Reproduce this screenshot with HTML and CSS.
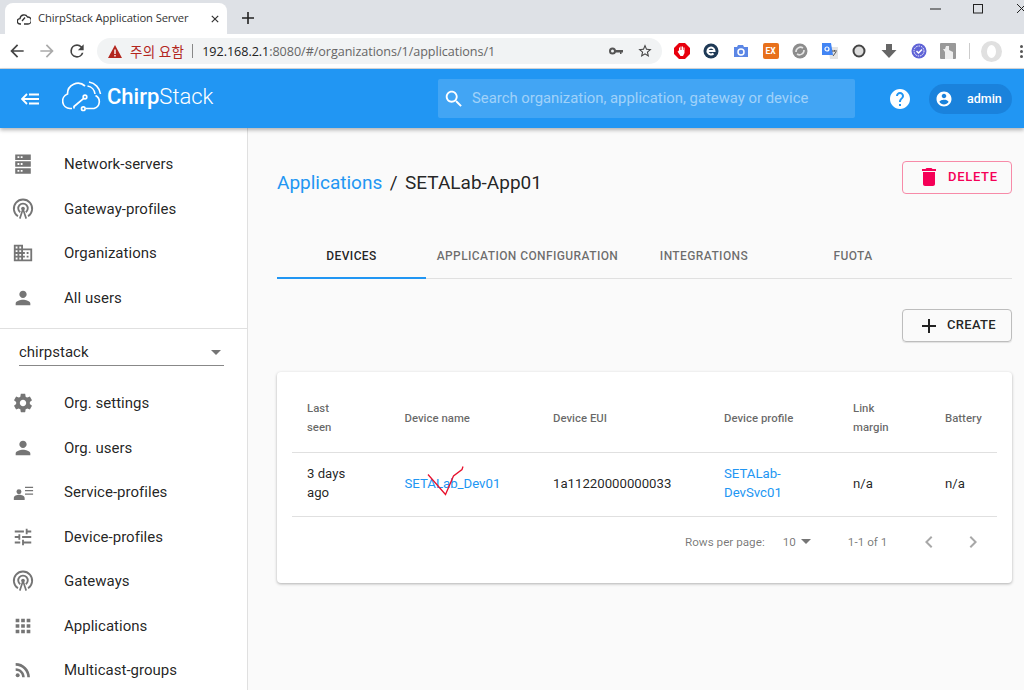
FILE: index.html
```html
<!DOCTYPE html>
<html lang="en">
<head>
<meta charset="utf-8">
<title>ChirpStack Application Server</title>
<link rel="stylesheet" href="styles.css">
</head>
<body>
<div class="tabstrip">
  <div class="tab">
    <svg class="favicon" viewBox="0 0 14 12"><path d="M4 11H3A2.500 2.500 0 0 1 3 5.600 4 4 0 0 1 10.500 4 3.500 3.500 0 0 1 11 11H7M5 8l3-3.500" fill="none" stroke="#333" stroke-width="1.300"/></svg>
    <span class="tab-title">ChirpStack Application Server</span>
    <svg class="tab-close" viewBox="0 0 10 10"><path d="M1 1l8 8M9 1l-8 8" stroke="#333" stroke-width="1.500"/></svg>
  </div>
  <svg class="newtab" viewBox="0 0 12 12"><path d="M6 0v12M0 6h12" stroke="#222" stroke-width="1.600"/></svg>
  <div class="winctl">
    <svg class="win-btn" viewBox="0 0 11 11"><path d="M0 6h11" stroke="#222" stroke-width="1"/></svg>
    <svg class="win-btn" viewBox="0 0 11 11"><rect x=".5" y="1.500" width="9" height="8.500" fill="none" stroke="#222"/></svg>
    <svg class="win-btn" viewBox="0 0 11 11"><path d="M1 1l9 9M10 1l-9 9" stroke="#222"/></svg>
  </div>
</div>
<div class="browserbar">
  <svg class="nav-ic" viewBox="0 0 24 24"><path fill="#444" d="M20 11H7.830l5.590-5.590L12 4l-8 8 8 8 1.410-1.410L7.830 13H20z"/></svg>
  <svg class="nav-ic" viewBox="0 0 24 24"><path fill="#aaa" d="M4 11h12.170l-5.590-5.590L12 4l8 8-8 8-1.410-1.410L16.170 13H4z"/></svg>
  <svg class="nav-ic" viewBox="0 0 24 24"><path fill="#444" d="M17.650 6.350A7.960 7.960 0 0 0 12 4a8 8 0 1 0 7.730 10h-2.080A6 6 0 1 1 12 6c1.660 0 3.140.69 4.220 1.780L13 11h7V4z"/></svg>
  <div class="omnibox">
    <svg class="warn" viewBox="0 0 14 13"><path fill="#b3261e" d="M7 0l7 13H0z"/><path fill="#fff" d="M6.300 4.500h1.400v4.500H6.300zM6.300 10h1.400v1.400H6.300z"/></svg>
    <span class="warn-text">주의 요함</span>
    <span class="omni-sep"></span>
    <span class="url"><span class="url-host">192.168.2.1</span>:8080/#/organizations/1/applications/1</span>
    <svg class="key" viewBox="0 0 14 8"><circle cx="3.500" cy="4" r="2.500" fill="none" stroke="#555" stroke-width="2"/><path d="M6 3h8v2.500h-1.500v1.500h-1.500V5.500H6z" fill="#555"/></svg>
    <svg class="star" viewBox="0 0 24 24"><path fill="#444" d="M22 9.240l-7.190-.620L12 2 9.190 8.630 2 9.240l5.460 4.730L5.820 21 12 17.270 18.180 21l-1.630-7.030L22 9.240zM12 15.400l-3.760 2.270 1-4.280-3.320-2.880 4.380-.380L12 6.100l1.710 4.040 4.380.380-3.320 2.880 1 4.280L12 15.400z"/></svg>
  </div>
  <div class="exts">
    <span class="ext"><svg viewBox="0 0 16 16"><path fill="#e8000d" d="M5 0h6l5 5v6l-5 5H5l-5-5V5z"/><path fill="#fff" d="M5 7V4.500h1V7h.500V3.500h1V7H8V3.500h1V7h.500V4.500h1V10l-1.500 3H6.500L3.500 8.500l1-.5z"/></svg></span>
    <span class="ext"><svg viewBox="0 0 16 16"><circle cx="8" cy="8" r="7.500" fill="#1f3a56"/><path d="M4.500 8h7A3.500 3.500 0 1 0 10.500 10.500" fill="none" stroke="#fff" stroke-width="2"/></svg></span>
    <span class="ext"><svg viewBox="0 0 16 16"><path fill="#5b86e5" d="M1 4h3l1-2h5l1 2h4v10H1z"/><circle cx="8" cy="9" r="3" fill="none" stroke="#fff" stroke-width="1.500"/></svg></span>
    <span class="ext"><span class="ext-ex">EX</span></span>
    <span class="ext"><svg viewBox="0 0 16 16"><circle cx="8" cy="8" r="7.500" fill="#8c8c8c"/><path d="M4 9a4.500 4.500 0 0 1 7-4M12 7a4.500 4.500 0 0 1-7 4" fill="none" stroke="#e4e4e4" stroke-width="1.600"/></svg></span>
    <span class="ext"><svg viewBox="0 0 16 16"><path fill="#e4e4e4" d="M6 4h10v12H8z"/><path fill="#4285f4" d="M0 0h9l2 12H0z"/><circle cx="5" cy="6" r="2" fill="none" stroke="#fff" stroke-width="1.200"/><path d="M10 8h5M12.500 7v1.500M11 13l3-4" stroke="#555" fill="none"/></svg></span>
    <span class="ext"><svg viewBox="0 0 16 16"><circle cx="8" cy="8" r="5.500" fill="#ddd" stroke="#444" stroke-width="2"/></svg></span>
    <span class="ext"><svg viewBox="0 0 16 16"><path fill="#666" d="M5 1h6v6h4.500L8 15 .5 7H5z"/></svg></span>
    <span class="ext"><svg viewBox="0 0 16 16"><circle cx="8" cy="8" r="7.500" fill="#5f63d6"/><circle cx="8" cy="8" r="5" fill="none" stroke="#fff" stroke-dasharray="1.500 1"/><path d="M5.500 8l2 2 3.500-3.500" fill="none" stroke="#fff" stroke-width="1.500"/></svg></span>
    <span class="ext"><svg viewBox="0 0 16 16"><rect width="16" height="16" rx="1" fill="#999"/><path fill="#eee" d="M5 16V9L3 6h2l1-3h3v4l4 2v7z"/></svg></span>
  </div>
  <span class="bar-sep"></span>
  <span class="avatar"><span class="avatar-in"></span></span>
  <span class="dots"><i></i><i></i><i></i></span>
</div>
<header class="appbar">
  <svg class="menu-back" viewBox="0 0 18 12"><path d="M6 1L1 6l5 5M1 6h17M8 1.500h10M8 10.500h10" fill="none" stroke="#fff" stroke-width="1.800"/></svg>
  <svg class="logo" viewBox="0 0 40 31"><g fill="none" stroke="#fff" stroke-width="1.700"><path d="M10 27.500H8A7.500 7.500 0 0 1 5.500 13 10.500 10.500 0 0 1 23 5M33.500 14.500A7 7 0 0 1 32 27.500H24"/><path d="M25.500 5A9 9 0 0 1 33 13M27 1A14 14 0 0 1 38.500 13" stroke-width="1.600"/><circle cx="23" cy="16" r="1.800"/><circle cx="21.300" cy="27.700" r="1.800"/><path d="M21.700 17.300L12 25.500V27.500"/></g></svg>
  <span class="brand"><b>Chirp</b>Stack</span>
  <div class="search">
    <svg class="search-ic" viewBox="0 0 24 24"><path fill="#fff" d="M15.500 14h-.790l-.280-.270C15.410 12.590 16 11.110 16 9.500 16 5.910 13.090 3 9.500 3S3 5.910 3 9.500 5.910 16 9.500 16c1.610 0 3.090-.590 4.230-1.570l.270.280v.790l5 4.990L20.490 19l-4.990-5zm-6 0C7.010 14 5 11.990 5 9.500S7.010 5 9.500 5 14 7.010 14 9.500 11.990 14 9.500 14z"/></svg>
    <span class="search-ph">Search organization, application, gateway or device</span>
  </div>
  <svg class="help" viewBox="0 0 24 24"><path fill="#fff" d="M12 2C6.480 2 2 6.480 2 12s4.480 10 10 10 10-4.480 10-10S17.520 2 12 2zm1 17h-2v-2h2v2zm2.070-7.750l-.9.920C13.450 12.900 13 13.500 13 15h-2v-.5c0-1.100.45-2.100 1.170-2.830l1.240-1.260c.37-.36.590-.86.590-1.410 0-1.100-.9-2-2-2s-2 .9-2 2H8c0-2.210 1.790-4 4-4s4 1.790 4 4c0 .88-.36 1.680-.93 2.250z"/></svg>
  <div class="chip">
    <svg class="chip-ic" viewBox="0 0 24 24"><path fill="#fff" d="M12 2C6.480 2 2 6.480 2 12s4.480 10 10 10 10-4.480 10-10S17.520 2 12 2zm0 3c1.660 0 3 1.340 3 3s-1.340 3-3 3-3-1.340-3-3 1.340-3 3-3zm0 14.200c-2.500 0-4.710-1.280-6-3.220.03-1.990 4-3.080 6-3.080 1.990 0 5.970 1.090 6 3.080-1.290 1.940-3.500 3.220-6 3.220z"/></svg>
    <span>admin</span>
  </div>
</header>
<div class="body">
  <nav class="sidebar">
    <ul class="menu menu-top">
      <li><svg viewBox="0 0 24 24"><path fill-rule="evenodd" d="M3.500 1.500h17v6h-17zM6 3.500v2h2v-2zM9.500 3.500v2h2v-2zM3.500 9h17v6h-17zM6 11v2h2v-2zM9.500 11v2h2v-2zM3.500 16.500h17v6h-17zM6 18.500v2h2v-2zM9.500 18.500v2h2v-2z"/></svg>Network-servers</li>
      <li><svg viewBox="0 0 24 24"><g fill="none" stroke="#757575" stroke-width="2"><path d="M6.500 20A10 10 0 1 1 17.500 20M9 15.500a5.200 5.200 0 1 1 6 0"/><path d="M12 12l-3.500 10.500M12 12l3.500 10.500" stroke-width="1.800"/></g><circle cx="12" cy="11.500" r="2"/></svg>Gateway-profiles</li>
      <li><svg viewBox="0 0 24 24"><path d="M12 7V3H2v18h20V7H12zM6 19H4v-2h2v2zm0-4H4v-2h2v2zm0-4H4V9h2v2zm0-4H4V5h2v2zm4 12H8v-2h2v2zm0-4H8v-2h2v2zm0-4H8V9h2v2zm0-4H8V5h2v2zm10 12h-8v-2h2v-2h-2v-2h2v-2h-2V9h8v10zm-2-8h-2v2h2v-2zm0 4h-2v2h2v-2z"/></svg>Organizations</li>
      <li><svg viewBox="0 0 24 24"><path d="M12 12c2.210 0 4-1.790 4-4s-1.790-4-4-4-4 1.790-4 4 1.790 4 4 4zm0 2c-2.670 0-8 1.340-8 4v2h16v-2c0-2.660-5.330-4-8-4z"/></svg>All users</li>
    </ul>
    <div class="org-select"><span>chirpstack</span><i class="caret"></i></div>
    <ul class="menu">
      <li><svg viewBox="0 0 24 24"><path d="M19.430 12.980c.04-.32.07-.64.07-.98s-.03-.66-.07-.98l2.110-1.650c.19-.15.24-.42.12-.64l-2-3.460c-.12-.22-.39-.3-.61-.22l-2.490 1c-.52-.4-1.080-.73-1.690-.98l-.38-2.650C14.460 2.180 14.250 2 14 2h-4c-.25 0-.46.18-.49.42l-.38 2.650c-.61.25-1.170.59-1.690.98l-2.490-1c-.23-.09-.49 0-.61.22l-2 3.460c-.13.22-.07.49.12.64l2.110 1.650c-.04.32-.07.65-.07.98s.03.66.07.98l-2.110 1.650c-.19.15-.24.42-.12.64l2 3.460c.12.22.39.3.61.22l2.490-1c.52.4 1.080.73 1.690.98l.38 2.650c.03.24.24.42.49.42h4c.25 0 .46-.18.49-.42l.38-2.650c.61-.25 1.170-.59 1.690-.98l2.490 1c.23.09.49 0 .61-.22l2-3.460c.12-.22.07-.49-.12-.64l-2.110-1.650zM12 15.500c-1.930 0-3.500-1.570-3.500-3.500s1.570-3.500 3.500-3.500 3.500 1.570 3.500 3.500-1.570 3.500-3.500 3.500z"/></svg>Org. settings</li>
      <li><svg viewBox="0 0 24 24"><path d="M12 12c2.210 0 4-1.790 4-4s-1.790-4-4-4-4 1.790-4 4 1.790 4 4 4zm0 2c-2.670 0-8 1.340-8 4v2h16v-2c0-2.660-5.330-4-8-4z"/></svg>Org. users</li>
      <li><svg viewBox="0 0 24 24"><circle cx="7.600" cy="11.700" r="2.700"/><path d="M2 20.700v-2.200c0-2.300 3.200-3.500 5.800-3.500s6 1.200 6 3.500v2.200zM14.200 6.200h8.800v1.400h-8.800zM14.200 9.900h8.800v1.400h-8.800zM14.200 13.500h8.800v1.400h-8.800z"/></svg>Service-profiles</li>
      <li><svg viewBox="0 0 24 24"><path d="M3 17v2h6v-2H3zM3 5v2h10V5H3zm10 16v-2h8v-2h-8v-2h-2v6h2zM7 9v2H3v2h4v2h2V9H7zm14 4v-2H11v2h10zm-6-4h2V7h4V5h-4V3h-2v6z"/></svg>Device-profiles</li>
      <li><svg viewBox="0 0 24 24"><g fill="none" stroke="#757575" stroke-width="2"><path d="M6.500 20A10 10 0 1 1 17.500 20M9 15.500a5.200 5.200 0 1 1 6 0"/><path d="M12 12l-3.500 10.500M12 12l3.500 10.500" stroke-width="1.800"/></g><circle cx="12" cy="11.500" r="2"/></svg>Gateways</li>
      <li><svg viewBox="0 0 24 24"><path d="M4 8h4V4H4v4zm6 12h4v-4h-4v4zm-6 0h4v-4H4v4zm0-6h4v-4H4v4zm6 0h4v-4h-4v4zm6-10v4h4V4h-4zm-6 4h4V4h-4v4zm6 6h4v-4h-4v4zm0 6h4v-4h-4v4z"/></svg>Applications</li>
      <li><svg viewBox="0 0 24 24"><circle cx="6.180" cy="17.820" r="2.180"/><path d="M4 4.440v2.830c7.030 0 12.730 5.700 12.730 12.730h2.830c0-8.590-6.970-15.560-15.560-15.560zm0 5.660v2.830c3.900 0 7.070 3.170 7.070 7.070h2.830c0-5.470-4.430-9.900-9.900-9.900z"/></svg>Multicast-groups</li>
    </ul>
  </nav>
  <main class="main">
    <div class="title-row">
      <h1 class="crumbs"><a class="crumb-link">Applications</a><span class="crumb-sep">/</span><span>SETALab-App01</span></h1>
      <button class="btn btn-delete"><svg viewBox="0 0 24 24"><path d="M6 19c0 1.100.9 2 2 2h8c1.100 0 2-.9 2-2V7H6v12zM19 4h-3.500l-1-1h-5l-1 1H5v2h14V4z"/></svg><span class="btn-label">DELETE</span></button>
    </div>
    <div class="tabs">
      <span class="t t1 active">DEVICES</span>
      <span class="t t2">APPLICATION CONFIGURATION</span>
      <span class="t t3">INTEGRATIONS</span>
      <span class="t t4">FUOTA</span>
    </div>
    <div class="action-row">
      <button class="btn btn-create"><svg viewBox="0 0 24 24"><path d="M19 13h-6v6h-2v-6H5v-2h6V5h2v6h6v2z"/></svg><span class="btn-label">CREATE</span></button>
    </div>
    <section class="card">
      <table class="devices">
        <colgroup><col class="c1"><col class="c2"><col class="c3"><col class="c4"><col class="c5"><col class="c6"></colgroup>
        <thead>
          <tr><th class="th-wrap">Last seen</th><th>Device name</th><th>Device EUI</th><th>Device profile</th><th class="th-wrap">Link margin</th><th>Battery</th></tr>
        </thead>
        <tbody>
          <tr>
            <td class="td-wrap">3 days ago</td>
            <td><span class="marked"><a>SETALab_Dev01</a><svg class="tick" viewBox="0 0 40 32"><path d="M1 8.500L18.500 28.500 26.500 10 35 3.500 36 .5" fill="none" stroke="#e8112d" stroke-width="1.300"/></svg></span></td>
            <td>1a11220000000033</td>
            <td><a>SETALab-DevSvc01</a></td>
            <td>n/a</td>
            <td>n/a</td>
          </tr>
        </tbody>
      </table>
      <div class="pager">
        <span>Rows per page:</span>
        <span class="pg-size">10<i class="caret"></i></span>
        <span class="pg-range">1-1 of 1</span>
        <svg viewBox="0 0 24 24"><path d="M15.410 7.410L14 6l-6 6 6 6 1.410-1.410L10.830 12z"/></svg>
        <svg viewBox="0 0 24 24"><path d="M10 6L8.590 7.410 13.170 12l-4.580 4.580L10 18l6-6z"/></svg>
      </div>
    </section>
  </main>
</div>
</body>
</html>
```
FILE: styles.css
```css
* { box-sizing: border-box; }
html, body { margin: 0; height: 690px; overflow: hidden; }
body { font-family: Roboto, "Noto Sans CJK KR", sans-serif; color: rgba(0,0,0,.87); background: #fafafa; display: flex; flex-direction: column; }

.tabstrip { height: 34px; background: #dee1e6; display: flex; align-items: flex-start; flex: none; }
.tab { margin: 3px 0 0 5px; width: 222px; height: 31px; background: #fff; border-radius: 8px 8px 0 0; display: flex; align-items: center; padding-left: 12px; }
.favicon { width: 14px; height: 12px; flex: none; }
.tab-title { margin-left: 7px; font: 11.200px "Open Sans", sans-serif; color: #333; white-space: nowrap; width: 160px; letter-spacing: -.1px; padding-bottom: 2px; }
.tab-close { width: 8px; height: 8px; margin-left: 13px; }
.newtab { width: 12px; height: 12px; margin: 12px 0 0 15px; }
.winctl { margin-left: auto; display: flex; gap: 32px; padding: 3px 0 0 0; margin-right: -3px; }
.win-btn { width: 11px; height: 11px; }

.browserbar { height: 35px; background: #fff; border-bottom: 1px solid #d6d8db; display: flex; align-items: center; padding: 0 0 0 7px; flex: none; }
.nav-ic { width: 20px; height: 20px; margin-right: 10px; flex: none; }
.omnibox { width: 565px; height: 26px; background: #f1f3f4; border-radius: 13px; display: flex; align-items: center; padding-left: 11px; flex: none; }
.warn { width: 14px; height: 13px; flex: none; }
.warn-text { margin-left: 8px; font: 13.500px "Noto Sans CJK KR", sans-serif; letter-spacing: .3px; color: #b3261e; white-space: nowrap; }
.omni-sep { width: 1px; height: 14px; background: #888; margin: 0 9px 0 8px; }
.url { font: 12.600px "Open Sans", sans-serif; color: #666; white-space: nowrap; width: 407px; letter-spacing: -.05px; }
.url-host { color: #222; }
.key { width: 14px; height: 8px; flex: none; }
.star { width: 16px; height: 16px; margin-left: 14px; flex: none; }
.exts { display: flex; margin-left: 5px; }
.ext { width: 29.600px; height: 18px; display: flex; justify-content: center; align-items: center; }
.ext svg { width: 16px; height: 16px; }
.ext-ex { width: 16px; height: 16px; background: #e8711c; border-radius: 2px; color: #fff; font: 700 8.500px/16px Roboto, sans-serif; text-align: center; }
.bar-sep { width: 1px; height: 16px; background: #ccc; margin-left: 6px; }
.avatar { width: 21px; height: 21px; border-radius: 50%; background: #e0e0e0; margin-left: 11px; display: flex; justify-content: center; align-items: center; flex: none; }
.avatar-in { width: 9px; height: 13px; border-radius: 50%; background: #fff; }
.dots { margin-left: 18px; display: flex; flex-direction: column; gap: 2px; flex: none; }
.dots i { width: 3px; height: 3px; border-radius: 50%; background: #555; display: block; }

.appbar { height: 59px; background: #2196f3; display: flex; align-items: center; flex: none; box-shadow: 0 2px 4px rgba(0,0,0,.3); position: relative; z-index: 2; padding-left: 21px; }
.menu-back { width: 18px; height: 12px; flex: none; }
.logo { width: 40px; height: 31px; margin: 0 0 5px 23px; flex: none; }
.brand { font: 300 22px/1 Roboto, sans-serif; color: #fff; margin-left: 5px; width: 331px; padding-bottom: 3px; }
.brand b { font-weight: 500; }
.search { width: 417px; height: 39px; background: rgba(255,255,255,.15); border-radius: 2px; display: flex; align-items: center; padding-left: 5px; flex: none; }
.search-ic { width: 22px; height: 22px; flex: none; }
.search-ph { margin-left: 7px; font-size: 14.850px; color: rgba(255,255,255,.5); white-space: nowrap; padding-bottom: 2px; }
.help { width: 24px; height: 24px; margin-left: 33px; flex: none; }
.chip { margin-left: 17px; width: 83px; height: 30px; border-radius: 15px; background: #1a82dc; display: flex; align-items: center; padding-left: 6px; color: #fff; font-size: 12.500px; font-weight: 500; }
.chip-ic { width: 18px; height: 18px; margin-right: 14px; }

.body { flex: 1; display: flex; min-height: 0; }
.sidebar { width: 248px; background: #fff; border-right: 1px solid #e0e0e0; flex: none; padding-top: 14px; overflow: hidden; }
.menu { list-style: none; margin: 0; padding: 0; }
.menu li { height: 44.500px; display: flex; align-items: center; padding-left: 12px; font-size: 15px; letter-spacing: .02px; white-space: nowrap; }
.menu svg { width: 22px; height: 22px; margin-right: 30px; fill: #757575; flex: none; }
.menu-top { padding-bottom: 8px; border-bottom: 1px solid #e0e0e0; }
.org-select { margin: 13px 23px 15px 19px; height: 24px; border-bottom: 1px solid #888; display: flex; align-items: center; justify-content: space-between; font-size: 15px; padding-right: 3px; padding-bottom: 3px; }
.caret { display: inline-block; width: 0; height: 0; border-left: 5px solid transparent; border-right: 5px solid transparent; border-top: 5px solid #757575; }

.main { flex: 1; min-width: 0; padding: 33px 12px 0 29px; }
.title-row { display: flex; justify-content: space-between; align-items: center; height: 32px; }
.crumbs { margin: 0; font-size: 19px; font-weight: 400; display: flex; align-items: center; padding-top: 12px; line-height: 24px; }
.crumb-link { color: #2196f3; }
.crumb-sep { margin: 0 7.500px; }
.btn { font-family: Roboto, sans-serif; font-size: 13px; font-weight: 500; background: transparent; width: 110px; border-radius: 4px; display: flex; align-items: center; padding: 0; }
.btn svg { width: 24px; height: 24px; flex: none; }
.btn-label { padding-bottom: 2px; }
.btn-delete { height: 33px; border: 1px solid #f78aa8; color: #f50057; padding-left: 14px; letter-spacing: .7px; }
.btn-delete svg { fill: #f50057; margin-right: 7px; }
.btn-create { height: 33px; border: 1px solid #bdbdbd; color: rgba(0,0,0,.87); padding-left: 14px; letter-spacing: .3px; box-shadow: 0 1px 1px rgba(0,0,0,.1); }
.btn-create svg { fill: #222; margin-right: 6px; }

.tabs { margin-top: 40px; height: 46px; display: flex; border-bottom: 1px solid #e0e0e0; }
.t { font-size: 12px; font-weight: 500; letter-spacing: .4px; color: rgba(0,0,0,.58); text-align: center; line-height: 47px; white-space: nowrap; height: 46px; }
.t1 { width: 149px; }
.t2 { width: 203px; }
.t3 { width: 150px; }
.t4 { width: 148px; }
.t.active { color: rgba(0,0,0,.87); border-bottom: 2px solid #2196f3; }

.action-row { margin-top: 30px; display: flex; justify-content: flex-end; }
.card { margin-top: 30px; background: #fff; border-radius: 4px; box-shadow: 0 1px 3px rgba(0,0,0,.3); padding: 13px 15px 15px; height: 211px; }
.devices { width: 705px; table-layout: fixed; border-collapse: collapse; }
.c1 { width: 97.500px; }
.c2 { width: 148.500px; }
.c3 { width: 171px; }
.c4 { width: 129px; }
.c5 { width: 92px; }
.c6 { width: 67px; }
.devices th { height: 67px; text-align: left; font-weight: 500; font-size: 11.400px; color: rgba(0,0,0,.6); line-height: 19px; padding: 0 15px; border-bottom: 1px solid #e0e0e0; }
.devices td { height: 64px; font-size: 13.200px; line-height: 19px; padding: 0 15px 2px; border-bottom: 1px solid #e0e0e0; }
.devices .th-wrap { padding-right: 40px; }
.devices .td-wrap { padding-right: 30px; }
.devices td a { color: #2196f3; }
.marked { position: relative; display: inline-block; white-space: nowrap; }
.tick { position: absolute; left: 22px; top: -8px; width: 40px; height: 32px; }
.pager { height: 50px; display: flex; align-items: center; font-size: 11.700px; color: rgba(0,0,0,.54); padding-left: 393px; }
.pager svg { width: 24px; height: 24px; fill: #a8a8a8; margin-left: 20px; flex: none; }
.pg-size { margin-left: 18px; display: inline-flex; align-items: center; gap: 5px; }
.pg-range { margin-left: 37px; margin-right: 10px; }
```
